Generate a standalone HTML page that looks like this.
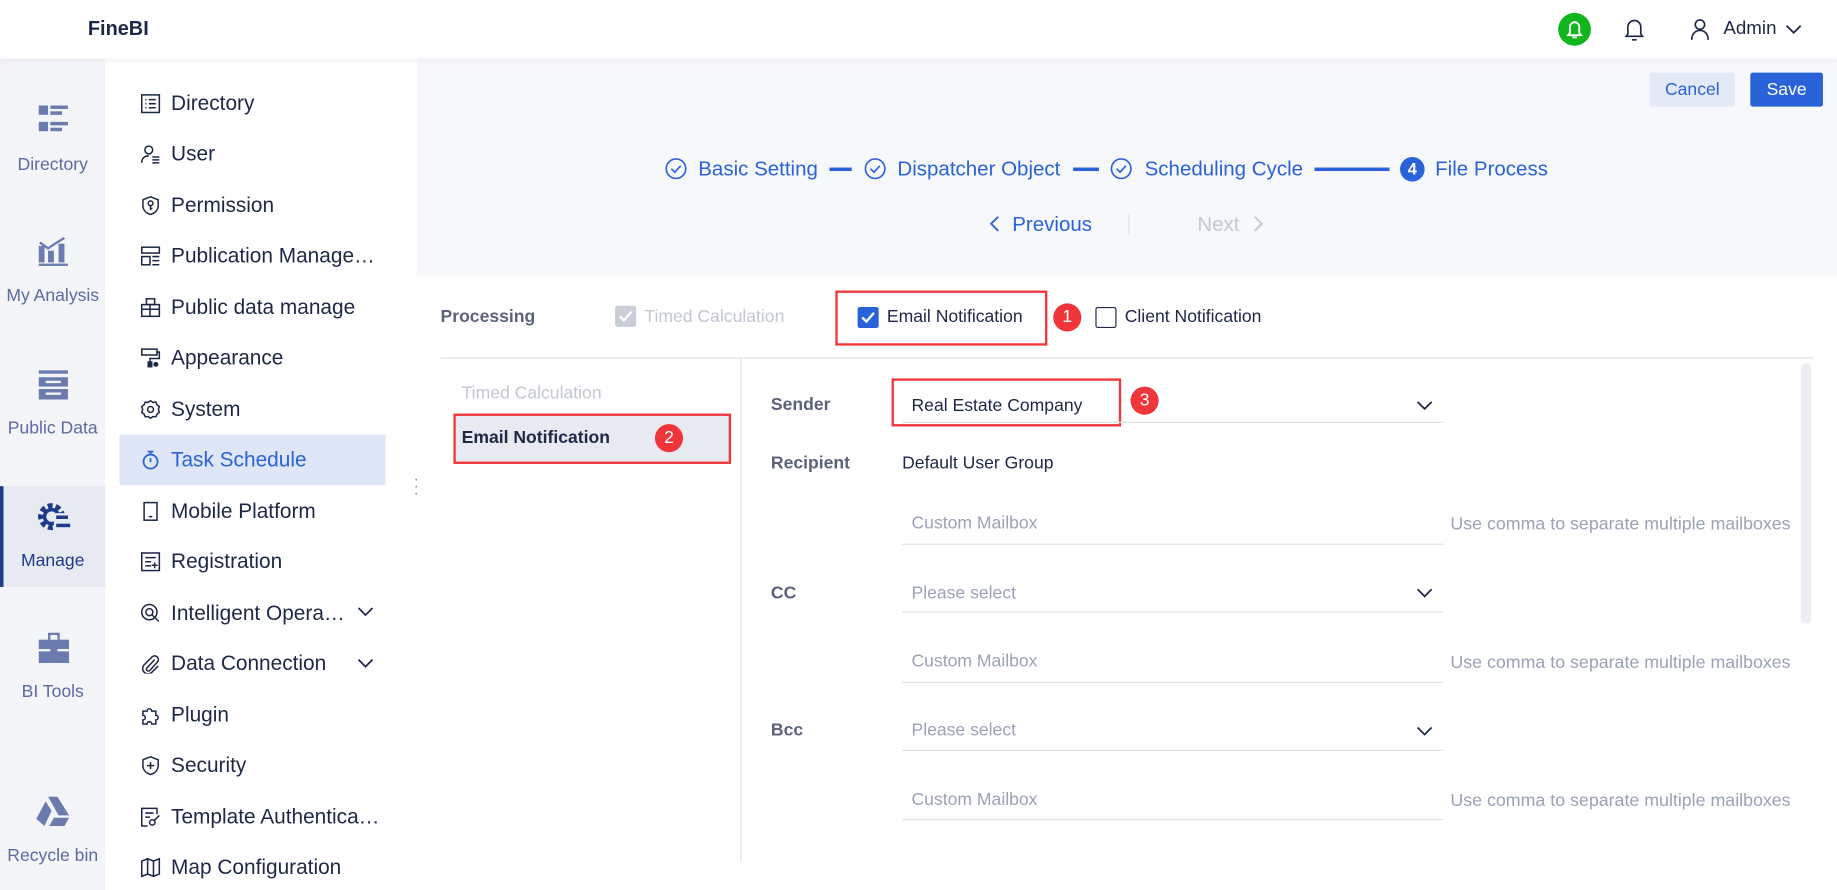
<!DOCTYPE html>
<html><head><meta charset="utf-8"><style>
*{margin:0;padding:0;box-sizing:border-box}
html,body{width:1837px;height:890px;overflow:hidden;background:#fff;font-family:"Liberation Sans",Arial,sans-serif}
#w{position:absolute;left:0;top:0;width:1568px;height:760px;transform:scale(1.17156);transform-origin:0 0;background:#fff}
.a{position:absolute;white-space:nowrap}
.rail{left:0;top:50px;width:90px;height:710px;background:#f4f5f9}
.ri{position:absolute;left:0;width:90px;text-align:center;font-size:15px;color:#5b6aa0}
.nav{left:90px;top:50px;width:266px;height:710px;background:#fff}
.ni{position:absolute;left:56px;font-size:17.8px;color:#1d2847;line-height:20px}
.ni svg{position:absolute;left:-26px;top:2px}
.lbl{font-size:15px;font-weight:bold;color:#5a637a}
.fl{position:absolute;left:770px;width:462px;border-bottom:1px solid #dfe2ea;height:1px}
.ph{font-size:15px;color:#9aa2b5}
.hint{font-size:15.2px;color:#9aa2b5;left:1238px}
.chev{position:absolute;left:1208px}
.red{position:absolute;border:2px solid #f0363a}
.badge{position:absolute;width:24px;height:24px;border-radius:50%;background:#f0363a;color:#fff;font-size:15px;text-align:center;line-height:24px}
.blue{color:#2a62d9}
</style></head><body><div id="w">
<!-- header -->
<div class="a" style="left:0;top:0;width:1568px;height:50px;background:#fff;box-shadow:0 2px 6px rgba(0,0,0,.06);z-index:2"></div>
<div class="a" style="left:75px;top:15px;font-size:17px;font-weight:bold;color:#1d2847;z-index:3">FineBI</div>
<div class="a" style="left:1330px;top:11px;width:28px;height:28px;border-radius:50%;background:#11b51e;z-index:3">
<svg width="28" height="28" viewBox="0 0 28 28"><path d="M8.5 19h11l-1.5-2v-5a4 4 0 0 0-8 0v5z" fill="none" stroke="#fff" stroke-width="1.6"/><path d="M12 21h4" stroke="#fff" stroke-width="1.6"/><path d="M14 7v1" stroke="#fff" stroke-width="1.6"/></svg></div>
<svg class="a" style="left:1384px;top:13px;z-index:3" width="22" height="24" viewBox="0 0 22 24"><path d="M4 18h14l-1.5-2V10a5.5 5.5 0 0 0-11 0v6z" fill="none" stroke="#1d2847" stroke-width="1.4"/><path d="M9 21h4" stroke="#1d2847" stroke-width="1.4"/></svg>
<svg class="a" style="left:1441px;top:14px;z-index:3" width="20" height="22" viewBox="0 0 20 22"><circle cx="10" cy="7" r="4" fill="none" stroke="#1d2847" stroke-width="1.4"/><path d="M3 20c0-5 3-8 7-8s7 3 7 8" fill="none" stroke="#1d2847" stroke-width="1.4"/></svg>
<div class="a" style="left:1471px;top:16px;font-size:16px;color:#1d2847;z-index:3">Admin</div>
<svg class="a" style="left:1523px;top:19px;z-index:3" width="16" height="12" viewBox="0 0 16 12"><path d="M2 3l6 6 6-6" fill="none" stroke="#1d2847" stroke-width="1.5"/></svg>

<!-- rail -->
<div class="a rail">
 <svg style="position:absolute;left:33px;top:40px" width="25" height="25" viewBox="0 0 25 25" fill="#6b7bad"><rect x="0" y="0" width="8" height="8"/><rect x="10" y="0" width="15" height="3"/><rect x="10" y="5" width="10" height="3"/><rect x="0" y="14" width="8" height="8"/><rect x="10" y="14" width="15" height="3"/><rect x="10" y="19" width="10" height="3"/></svg>
 <div class="ri" style="top:82px">Directory</div>
 <svg style="position:absolute;left:33px;top:152px" width="25" height="25" viewBox="0 0 25 25" fill="#6b7bad"><rect x="0" y="8" width="5" height="14"/><rect x="8" y="12" width="5" height="10"/><rect x="17" y="6" width="5" height="16"/><rect x="0" y="23" width="25" height="2"/><path d="M1 5l7 5 6-4 8-5" stroke="#6b7bad" stroke-width="2" fill="none"/></svg>
 <div class="ri" style="top:194px">My Analysis</div>
 <svg style="position:absolute;left:33px;top:266px" width="25" height="25" viewBox="0 0 25 25" fill="#6b7bad"><rect x="0" y="0" width="25" height="3"/><rect x="0" y="6" width="25" height="8"/><rect x="0" y="16" width="25" height="9"/><rect x="6" y="9" width="13" height="2" fill="#f4f5f9"/><rect x="6" y="19" width="13" height="2" fill="#f4f5f9"/></svg>
 <div class="ri" style="top:307px">Public Data</div>
 <div style="position:absolute;left:0;top:365px;width:90px;height:86px;background:#e8eaf2;border-left:3px solid #1e3a8a"></div>
 <svg style="position:absolute;left:32px;top:377px" width="28" height="28" viewBox="0 0 28 28"><circle cx="12" cy="14" r="9" fill="none" stroke="#1e3a8a" stroke-width="5" stroke-dasharray="4 2.5"/><circle cx="12" cy="14" r="6" fill="none" stroke="#1e3a8a" stroke-width="3"/><rect x="14" y="11" width="13" height="17" fill="#e8eaf2"/><rect x="16" y="13" width="10" height="3" fill="#1e3a8a"/><rect x="16" y="20" width="12" height="3" fill="#1e3a8a"/></svg>
 <div class="ri" style="top:420px;color:#1e3a8a">Manage</div>
 <svg style="position:absolute;left:33px;top:490px" width="26" height="26" viewBox="0 0 26 26" fill="#6b7bad"><rect x="0" y="6" width="26" height="20"/><rect x="8" y="0" width="10" height="6"/><rect x="10" y="2" width="6" height="4" fill="#f4f5f9"/><rect x="0" y="14" width="26" height="2" fill="#f4f5f9"/><rect x="10" y="11" width="6" height="8"/></svg>
 <div class="ri" style="top:532px">BI Tools</div>
 <svg style="position:absolute;left:31px;top:630px" width="28" height="26" viewBox="0 0 28 26" fill="#6b7bad"><path d="M10 0h8l10 16h-9z"/><path d="M8 4l5 8-6 13L0 19z"/><path d="M11 25l4-7h13l-4 7z"/></svg>
 <div class="ri" style="top:672px">Recycle bin</div>
</div>

<!-- nav -->
<div class="a nav">
 <div style="position:absolute;left:12px;top:321px;width:227px;height:43px;background:#dfe6f7"></div>
 <div class="ni" style="top:28px"><svg width="17" height="17" viewBox="0 0 17 17" fill="none" stroke="#1d2847" stroke-width="1.3"><rect x="1" y="1" width="15" height="15"/><path d="M4 5h1M7 5h6M4 8.5h1M7 8.5h6M4 12h1M7 12h6"/></svg>Directory</div>
 <div class="ni" style="top:71px"><svg width="17" height="17" viewBox="0 0 17 17" fill="none" stroke="#1d2847" stroke-width="1.3"><circle cx="7" cy="5" r="3.3"/><path d="M1 16c0-4 2.5-6 6-6"/><path d="M10 11h6M10 13.5h6M10 16h6"/></svg>User</div>
 <div class="ni" style="top:115px"><svg width="17" height="17" viewBox="0 0 17 17" fill="none" stroke="#1d2847" stroke-width="1.3"><path d="M8.5 1l6.5 2.5v5c0 4-3 6.5-6.5 7.5C5 15 2 12.5 2 8.5v-5z"/><circle cx="8.5" cy="6.5" r="2"/><path d="M8.5 8.5v4M8.5 11h1.5"/></svg>Permission</div>
 <div class="ni" style="top:158px"><svg width="17" height="17" viewBox="0 0 17 17" fill="none" stroke="#1d2847" stroke-width="1.3"><rect x="1" y="1" width="15" height="5"/><rect x="1" y="9" width="7" height="7"/><path d="M10 9h6M10 12.5h6M10 16h6"/></svg>Publication Manage…</div>
 <div class="ni" style="top:202px"><svg width="17" height="17" viewBox="0 0 17 17" fill="none" stroke="#1d2847" stroke-width="1.3"><rect x="1" y="6" width="15" height="10"/><rect x="5" y="1" width="7" height="5"/><path d="M1 10h15M8 6v10"/></svg>Public data manage</div>
 <div class="ni" style="top:245px"><svg width="17" height="17" viewBox="0 0 17 17" fill="none" stroke="#1d2847" stroke-width="1.3"><rect x="1" y="1" width="13" height="5"/><path d="M14 3.5h2V9H8v3"/><rect x="6.5" y="12" width="3" height="4" fill="#1d2847"/><circle cx="13" cy="14" r="1.5" fill="#1d2847"/></svg>Appearance</div>
 <div class="ni" style="top:289px"><svg width="17" height="17" viewBox="0 0 17 17" fill="none" stroke="#1d2847" stroke-width="1.3"><path d="M8.5 1l2 1.5 2.5-.3 1 2.3 2 1.5-.8 2.5.8 2.5-2 1.5-1 2.3-2.5-.3-2 1.5-2-1.5-2.5.3-1-2.3-2-1.5.8-2.5L1 6l2-1.5 1-2.3 2.5.3z"/><circle cx="8.5" cy="8.5" r="2.5"/></svg>System</div>
 <div class="ni blue" style="top:332px"><svg width="17" height="17" viewBox="0 0 17 17" fill="none" stroke="#2a62d9" stroke-width="1.5"><circle cx="8.5" cy="10" r="6"/><path d="M6 1.5h5M8.5 1.5v2.5M8.5 7v3.5"/></svg>Task Schedule</div>
 <div class="ni" style="top:376px"><svg width="17" height="17" viewBox="0 0 17 17" fill="none" stroke="#1d2847" stroke-width="1.3"><rect x="3" y="1" width="11" height="15"/><path d="M7 13h3"/></svg>Mobile Platform</div>
 <div class="ni" style="top:419px"><svg width="17" height="17" viewBox="0 0 17 17" fill="none" stroke="#1d2847" stroke-width="1.3"><rect x="1" y="1" width="15" height="15"/><path d="M4 5h9M4 8.5h5M4 12h5M12 9v5M9.5 11.5h5"/></svg>Registration</div>
 <div class="ni" style="top:463px"><svg width="17" height="17" viewBox="0 0 17 17" fill="none" stroke="#1d2847" stroke-width="1.3"><circle cx="7.5" cy="7.5" r="6.5"/><circle cx="7.5" cy="7.5" r="3"/><path d="M9.5 9.5l6 6"/></svg>Intelligent Opera…</div>
 <svg style="position:absolute;left:214px;top:466px" width="16" height="12" viewBox="0 0 16 12"><path d="M2 3l6 6 6-6" fill="none" stroke="#1d2847" stroke-width="1.5"/></svg>
 <div class="ni" style="top:506px"><svg width="17" height="17" viewBox="0 0 17 17" fill="none" stroke="#1d2847" stroke-width="1.3"><path d="M12 5l-6.5 7a1.6 1.6 0 0 0 2.3 2.3L14.5 7a3.2 3.2 0 0 0-4.5-4.5L3 9.5a4.6 4.6 0 0 0 6.5 6.5L15 10.5"/></svg>Data Connection</div>
 <svg style="position:absolute;left:214px;top:510px" width="16" height="12" viewBox="0 0 16 12"><path d="M2 3l6 6 6-6" fill="none" stroke="#1d2847" stroke-width="1.5"/></svg>
 <div class="ni" style="top:550px"><svg width="17" height="17" viewBox="0 0 17 17" fill="none" stroke="#1d2847" stroke-width="1.3"><path d="M2 5h3.5a2 2 0 1 1 4 0H13v3.5a2 2 0 1 1 0 4V16H9.5a2 2 0 1 0-4 0H2v-3.5a2 2 0 1 0 0-4z"/></svg>Plugin</div>
 <div class="ni" style="top:593px"><svg width="17" height="17" viewBox="0 0 17 17" fill="none" stroke="#1d2847" stroke-width="1.3"><path d="M8.5 1l6.5 2.5v5c0 4-3 6.5-6.5 7.5C5 15 2 12.5 2 8.5v-5z"/><path d="M8.5 5.5v6M5.5 8.5h6"/></svg>Security</div>
 <div class="ni" style="top:637px"><svg width="17" height="17" viewBox="0 0 17 17" fill="none" stroke="#1d2847" stroke-width="1.3"><path d="M14 6V1H1v15h5"/><path d="M4 5h7M4 8.5h4"/><circle cx="10" cy="13" r="2.3"/><path d="M11.7 11.3L16 7"/></svg>Template Authentica…</div>
 <div class="ni" style="top:680px"><svg width="17" height="17" viewBox="0 0 17 17" fill="none" stroke="#1d2847" stroke-width="1.3"><path d="M1 3l5-2 5 2 5-2v13l-5 2-5-2-5 2z"/><path d="M6 1v13M11 3v13"/></svg>Map Configuration</div>
</div>
<div class="a" style="left:353px;top:405px;font-size:14px;color:#8a92a8;line-height:6px">·<br>·<br>·</div>

<!-- top main area -->
<div class="a" style="left:356px;top:50px;width:1212px;height:185px;background:#f7f8fc"></div>
<div class="a" style="left:1408px;top:62px;width:73px;height:29px;background:#e3e9f7;border-radius:2px;color:#2a62d9;font-size:15px;text-align:center;line-height:29px">Cancel</div>
<div class="a" style="left:1494px;top:62px;width:62px;height:29px;background:#2a62d9;border-radius:2px;color:#fff;font-size:15px;text-align:center;line-height:29px">Save</div>

<svg class="a" style="left:567px;top:134px" width="20" height="20" viewBox="0 0 20 20" fill="none" stroke="#2a62d9" stroke-width="1.4"><circle cx="10" cy="10" r="8.3"/><path d="M6 10l3 3 5-5.5"/></svg>
<div class="a blue" style="left:596px;top:134px;font-size:17.5px">Basic Setting</div>
<div class="a" style="left:708px;top:143px;width:19px;height:2.5px;background:#2a62d9"></div>
<svg class="a" style="left:737px;top:134px" width="20" height="20" viewBox="0 0 20 20" fill="none" stroke="#2a62d9" stroke-width="1.4"><circle cx="10" cy="10" r="8.3"/><path d="M6 10l3 3 5-5.5"/></svg>
<div class="a blue" style="left:766px;top:134px;font-size:17.5px">Dispatcher Object</div>
<div class="a" style="left:916px;top:143px;width:22px;height:2.5px;background:#2a62d9"></div>
<svg class="a" style="left:947px;top:134px" width="20" height="20" viewBox="0 0 20 20" fill="none" stroke="#2a62d9" stroke-width="1.4"><circle cx="10" cy="10" r="8.3"/><path d="M6 10l3 3 5-5.5"/></svg>
<div class="a blue" style="left:977px;top:134px;font-size:17.5px">Scheduling Cycle</div>
<div class="a" style="left:1122px;top:143px;width:64px;height:2.5px;background:#2a62d9"></div>
<div class="a" style="left:1195px;top:134px;width:21px;height:21px;border-radius:50%;background:#2a62d9;color:#fff;font-size:14px;text-align:center;line-height:21px;font-weight:bold">4</div>
<div class="a blue" style="left:1225px;top:134px;font-size:17.5px">File Process</div>

<svg class="a" style="left:843px;top:183px" width="12" height="16" viewBox="0 0 12 16"><path d="M9 2L3 8l6 6" fill="none" stroke="#2a62d9" stroke-width="1.6"/></svg>
<div class="a blue" style="left:864px;top:181px;font-size:17.5px">Previous</div>
<div class="a" style="left:963px;top:183px;width:1px;height:17px;background:#dfe2ea"></div>
<div class="a" style="left:1022px;top:181px;font-size:17.5px;color:#c2c7d3">Next</div>
<svg class="a" style="left:1068px;top:183px" width="12" height="16" viewBox="0 0 12 16"><path d="M3 2l6 6-6 6" fill="none" stroke="#c2c7d3" stroke-width="1.6"/></svg>

<!-- processing row -->
<div class="a lbl" style="left:376px;top:262px">Processing</div>
<div class="a" style="left:525px;top:261px;width:18px;height:18px;background:#c9ced8;border-radius:2px"><svg width="18" height="18" viewBox="0 0 18 18"><path d="M4 9l3.5 3.5L14 5" fill="none" stroke="#fff" stroke-width="2"/></svg></div>
<div class="a" style="left:550px;top:262px;font-size:15px;color:#c2c7d3">Timed Calculation</div>
<div class="red" style="left:713px;top:248px;width:181px;height:47px"></div>
<div class="a" style="left:732px;top:262px;width:18px;height:18px;background:#2a62d9;border-radius:2px"><svg width="18" height="18" viewBox="0 0 18 18"><path d="M4 9l3.5 3.5L14 5" fill="none" stroke="#fff" stroke-width="2"/></svg></div>
<div class="a" style="left:757px;top:262px;font-size:15px;color:#1d2847">Email Notification</div>
<div class="badge" style="left:899px;top:259px">1</div>
<div class="a" style="left:935px;top:262px;width:18px;height:18px;border:1.3px solid #1d2847;border-radius:2px"></div>
<div class="a" style="left:960px;top:262px;font-size:15px;color:#1d2847">Client Notification</div>
<div class="a" style="left:376px;top:305px;width:1172px;height:1px;background:#dfe2ea"></div>

<!-- left tabs -->
<div class="a" style="left:632px;top:306px;width:1px;height:430px;background:#dfe2ea"></div>
<div class="a" style="left:394px;top:327px;font-size:15px;color:#c2c7d3">Timed Calculation</div>
<div class="a" style="left:387px;top:353px;width:237px;height:42px;background:#e8eaf2"></div>
<div class="red" style="left:387px;top:353px;width:237px;height:43px"></div>
<div class="a" style="left:394px;top:365px;font-size:15px;font-weight:bold;color:#1d2847">Email Notification</div>
<div class="badge" style="left:559px;top:362px">2</div>

<!-- form -->
<div class="a lbl" style="left:658px;top:337px">Sender</div>
<div class="a" style="left:778px;top:338px;font-size:15px;color:#1d2847">Real Estate Company</div>
<div class="red" style="left:761px;top:323px;width:196px;height:41px"></div>
<div class="badge" style="left:965px;top:330px">3</div>
<div class="fl" style="top:360px"></div>
<svg class="chev" style="top:340px" width="16" height="12" viewBox="0 0 16 12"><path d="M2 3l6 6 6-6" fill="none" stroke="#1d2847" stroke-width="1.5"/></svg>

<div class="a lbl" style="left:658px;top:387px">Recipient</div>
<div class="a" style="left:770px;top:387px;font-size:15px;color:#1d2847">Default User Group</div>

<div class="a ph" style="left:778px;top:438px">Custom Mailbox</div>
<div class="fl" style="top:464px"></div>
<div class="a hint" style="top:439px">Use comma to separate multiple mailboxes</div>

<div class="a lbl" style="left:658px;top:498px">CC</div>
<div class="a ph" style="left:778px;top:498px">Please select</div>
<div class="fl" style="top:522px"></div>
<svg class="chev" style="top:500px" width="16" height="12" viewBox="0 0 16 12"><path d="M2 3l6 6 6-6" fill="none" stroke="#1d2847" stroke-width="1.5"/></svg>

<div class="a ph" style="left:778px;top:556px">Custom Mailbox</div>
<div class="fl" style="top:582px"></div>
<div class="a hint" style="top:557px">Use comma to separate multiple mailboxes</div>

<div class="a lbl" style="left:658px;top:615px">Bcc</div>
<div class="a ph" style="left:778px;top:615px">Please select</div>
<div class="fl" style="top:640px"></div>
<svg class="chev" style="top:618px" width="16" height="12" viewBox="0 0 16 12"><path d="M2 3l6 6 6-6" fill="none" stroke="#1d2847" stroke-width="1.5"/></svg>

<div class="a ph" style="left:778px;top:674px">Custom Mailbox</div>
<div class="fl" style="top:699px"></div>
<div class="a hint" style="top:675px">Use comma to separate multiple mailboxes</div>

<div class="a" style="left:1537px;top:310px;width:9px;height:222px;background:#eceef3;border-radius:4px"></div>
</div></body></html>
